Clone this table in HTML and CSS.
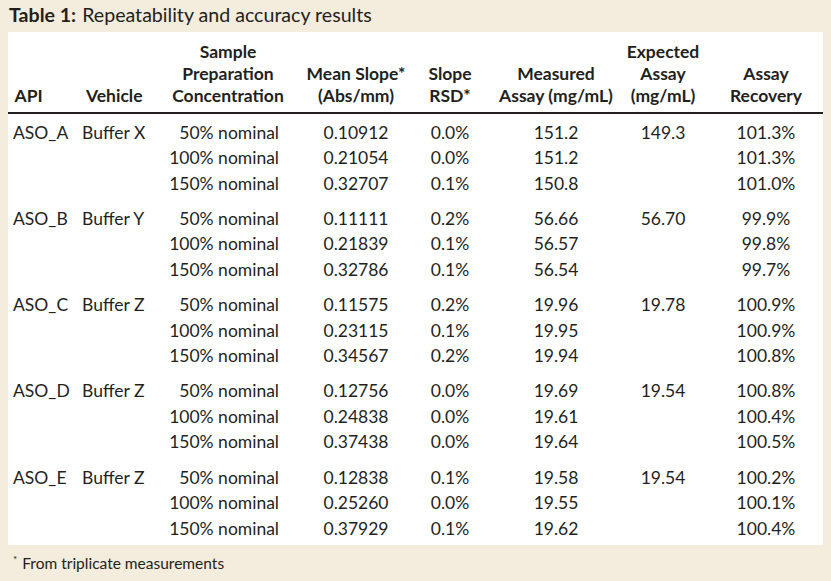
FILE: index.html
```html
<!DOCTYPE html>
<html lang="en">
<head>
<meta charset="utf-8">
<title>Table 1: Repeatability and accuracy results</title>
<link rel="stylesheet" href="styles.css">
</head>
<body>
<h1 class="title"><b>Table 1:</b> Repeatability and accuracy results</h1>
<div class="panel">
<table class="results">
<colgroup>
<col class="c-api"><col class="c-veh"><col class="c-conc"><col class="c-slope"><col class="c-rsd"><col class="c-meas"><col class="c-exp"><col class="c-rec">
</colgroup>
<thead>
<tr>
<th class="api">API</th>
<th class="veh">Vehicle</th>
<th>Sample<br>Preparation<br>Concentration</th>
<th>Mean Slope*<br>(Abs/mm)</th>
<th>Slope<br>RSD*</th>
<th>Measured<br>Assay (mg/mL)</th>
<th>Expected<br>Assay<br>(mg/mL)</th>
<th class="rec">Assay<br>Recovery</th>
</tr>
</thead>
<tbody>
<tr class="first"><td class="api">ASO_A</td><td class="veh">Buffer X</td><td class="conc">50% nominal</td><td>0.10912</td><td>0.0%</td><td>151.2</td><td>149.3</td><td class="rec">101.3%</td></tr>
<tr><td></td><td></td><td class="conc">100% nominal</td><td>0.21054</td><td>0.0%</td><td>151.2</td><td></td><td class="rec">101.3%</td></tr>
<tr class="last"><td></td><td></td><td class="conc">150% nominal</td><td>0.32707</td><td>0.1%</td><td>150.8</td><td></td><td class="rec">101.0%</td></tr>

<tr class="first"><td class="api">ASO_B</td><td class="veh">Buffer Y</td><td class="conc">50% nominal</td><td>0.11111</td><td>0.2%</td><td>56.66</td><td>56.70</td><td class="rec">99.9%</td></tr>
<tr><td></td><td></td><td class="conc">100% nominal</td><td>0.21839</td><td>0.1%</td><td>56.57</td><td></td><td class="rec">99.8%</td></tr>
<tr class="last"><td></td><td></td><td class="conc">150% nominal</td><td>0.32786</td><td>0.1%</td><td>56.54</td><td></td><td class="rec">99.7%</td></tr>

<tr class="first"><td class="api">ASO_C</td><td class="veh">Buffer Z</td><td class="conc">50% nominal</td><td>0.11575</td><td>0.2%</td><td>19.96</td><td>19.78</td><td class="rec">100.9%</td></tr>
<tr><td></td><td></td><td class="conc">100% nominal</td><td>0.23115</td><td>0.1%</td><td>19.95</td><td></td><td class="rec">100.9%</td></tr>
<tr class="last"><td></td><td></td><td class="conc">150% nominal</td><td>0.34567</td><td>0.2%</td><td>19.94</td><td></td><td class="rec">100.8%</td></tr>

<tr class="first"><td class="api">ASO_D</td><td class="veh">Buffer Z</td><td class="conc">50% nominal</td><td>0.12756</td><td>0.0%</td><td>19.69</td><td>19.54</td><td class="rec">100.8%</td></tr>
<tr><td></td><td></td><td class="conc">100% nominal</td><td>0.24838</td><td>0.0%</td><td>19.61</td><td></td><td class="rec">100.4%</td></tr>
<tr class="last"><td></td><td></td><td class="conc">150% nominal</td><td>0.37438</td><td>0.0%</td><td>19.64</td><td></td><td class="rec">100.5%</td></tr>

<tr class="first"><td class="api">ASO_E</td><td class="veh">Buffer Z</td><td class="conc">50% nominal</td><td>0.12838</td><td>0.1%</td><td>19.58</td><td>19.54</td><td class="rec">100.2%</td></tr>
<tr><td></td><td></td><td class="conc">100% nominal</td><td>0.25260</td><td>0.0%</td><td>19.55</td><td></td><td class="rec">100.1%</td></tr>
<tr class="last"><td></td><td></td><td class="conc">150% nominal</td><td>0.37929</td><td>0.1%</td><td>19.62</td><td></td><td class="rec">100.4%</td></tr>
</tbody>
</table>
</div>
<p class="footnote"><sup>*</sup>From triplicate measurements</p>
</body>
</html>
```
FILE: styles.css
```css
html, body {
  margin: 0;
  background: #f4ecdc;
}
body {
  padding: 3px 8px 0;
  font-family: Lato, "Liberation Sans", sans-serif;
  color: #231f20;
}
.title {
  margin: 0 0 5px 1px;
  font-size: 19.6px;
  line-height: 24px;
  font-weight: 400;
  white-space: nowrap;
}
.title b {
  font-weight: 700;
  margin-right: 1px;
}
.panel {
  background: #fff;
  width: 815px;
  height: 513px;
}
.results {
  table-layout: fixed;
  width: 815px;
  border-collapse: collapse;
  border-spacing: 0;
  font-size: 17.5px;
}
.c-api { width: 65px; }
.c-veh { width: 80px; }
.c-conc { width: 150px; }
.c-slope { width: 106px; }
.c-rsd { width: 82px; }
.c-meas { width: 130px; }
.c-exp { width: 84px; }
.c-rec { width: 118px; }

.results th {
  font-weight: 700;
  line-height: 22px;
  padding: 9px 0 5px;
  vertical-align: bottom;
  text-align: center;
  white-space: nowrap;
  border-bottom: 2px solid #231f20;
}
.results td {
  line-height: 25.5px;
  padding: 0;
  text-align: center;
  white-space: nowrap;
  vertical-align: top;
}
.results tr.first td { padding-top: 5.5px; }
.results tr.last td { padding-bottom: 4.25px; }

.results th.api { text-align: left; padding-left: 6.5px; }
.results td.api { text-align: left; padding-left: 5px; }
.results th.veh { text-align: left; padding-left: 13px; }
.results td.veh { text-align: left; padding-left: 9px; }
.results td.conc { text-align: right; padding-right: 24px; }
.results .rec { padding-left: 4px; }

.footnote {
  margin: 7.5px 0 0 5px;
  font-size: 15.5px;
  line-height: 20px;
}
.footnote sup {
  font-size: 10px;
  line-height: 0;
  vertical-align: 6px;
  margin-right: 5px;
}
```
